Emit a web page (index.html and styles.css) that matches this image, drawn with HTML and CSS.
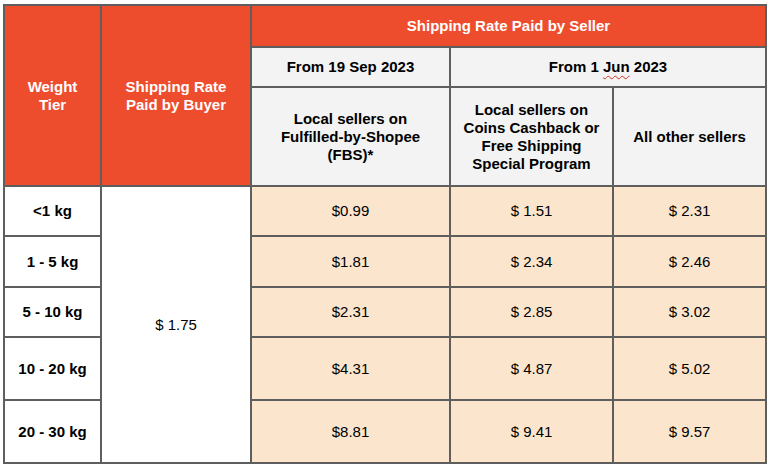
FILE: index.html
```html
<!DOCTYPE html>
<html lang="en">
<head>
<meta charset="utf-8">
<title>Shipping Rates</title>
<link rel="stylesheet" href="styles.css">
</head>
<body>
<table class="rates">
  <colgroup>
    <col class="c-weight">
    <col class="c-buyer">
    <col class="c-fbs">
    <col class="c-coins">
    <col class="c-other">
  </colgroup>
  <thead>
    <tr class="h1">
      <th rowspan="3" class="red">Weight<br>Tier</th>
      <th rowspan="3" class="red">Shipping Rate<br>Paid by Buyer</th>
      <th colspan="3" class="red">Shipping Rate Paid by Seller</th>
    </tr>
    <tr class="h2">
      <th class="grey">From 19 Sep 2023</th>
      <th colspan="2" class="grey">From 1 <span class="spell">Jun</span> 2023</th>
    </tr>
    <tr class="h3">
      <th class="grey">Local sellers on<br>Fulfilled-by-Shopee<br>(FBS)*</th>
      <th class="grey">Local sellers on<br>Coins Cashback or<br>Free Shipping<br>Special Program</th>
      <th class="grey">All other sellers</th>
    </tr>
  </thead>
  <tbody>
    <tr class="r-s">
      <th class="tier">&lt;1 kg</th>
      <td rowspan="5" class="buyer">$ 1.75</td>
      <td class="peach">$0.99</td>
      <td class="peach">$ 1.51</td>
      <td class="peach">$ 2.31</td>
    </tr>
    <tr class="r-m">
      <th class="tier">1 - 5 kg</th>
      <td class="peach">$1.81</td>
      <td class="peach">$ 2.34</td>
      <td class="peach hi">$ 2.46</td>
    </tr>
    <tr class="r-s">
      <th class="tier">5 - 10 kg</th>
      <td class="peach">$2.31</td>
      <td class="peach">$ 2.85</td>
      <td class="peach hi">$ 3.02</td>
    </tr>
    <tr class="r-l">
      <th class="tier">10 - 20 kg</th>
      <td class="peach">$4.31</td>
      <td class="peach">$ 4.87</td>
      <td class="peach hi">$ 5.02</td>
    </tr>
    <tr class="r-l">
      <th class="tier">20 - 30 kg</th>
      <td class="peach">$8.81</td>
      <td class="peach">$ 9.41</td>
      <td class="peach hi">$ 9.57</td>
    </tr>
  </tbody>
</table>
</body>
</html>
```

FILE: styles.css
```css
html, body {
  margin: 0;
  padding: 0;
  background: #ffffff;
}

body {
  padding: 4px 0 0 3px;
  font-family: "Liberation Sans", Arial, sans-serif;
  font-size: 15px;
  color: #000000;
}

.rates {
  border-collapse: collapse;
  table-layout: fixed;
  width: 762px;
  border: 2px solid #4f4f4f;
}

.c-weight { width: 97px; }
.c-buyer { width: 150px; }
.c-fbs { width: 199px; }
.c-coins { width: 163px; }
.c-other { width: 153px; }

.rates th,
.rates td {
  border: 2px solid #5e5e5e;
  padding: 0 2px;
  text-align: center;
  vertical-align: middle;
  line-height: 18px;
}

.rates th {
  font-weight: bold;
}

.h1 { height: 42px; }
.h2 { height: 40px; }
.h3 { height: 99px; }
.r-s { height: 50px; }
.r-m { height: 51px; }
.r-l { height: 63px; }

.red {
  background: #ee4d2d;
  color: #ffffff;
}

.grey {
  background: #f3f3f3;
  color: #000000;
}

.tier {
  background: #ffffff;
}

.buyer {
  background: #ffffff;
  font-weight: normal;
}

.peach {
  background: #fce5cd;
}

.hi {
  padding-bottom: 4px;
}

.spell {
  text-decoration: underline wavy #d93025;
  text-decoration-thickness: 1px;
  text-underline-offset: 3px;
}
```
